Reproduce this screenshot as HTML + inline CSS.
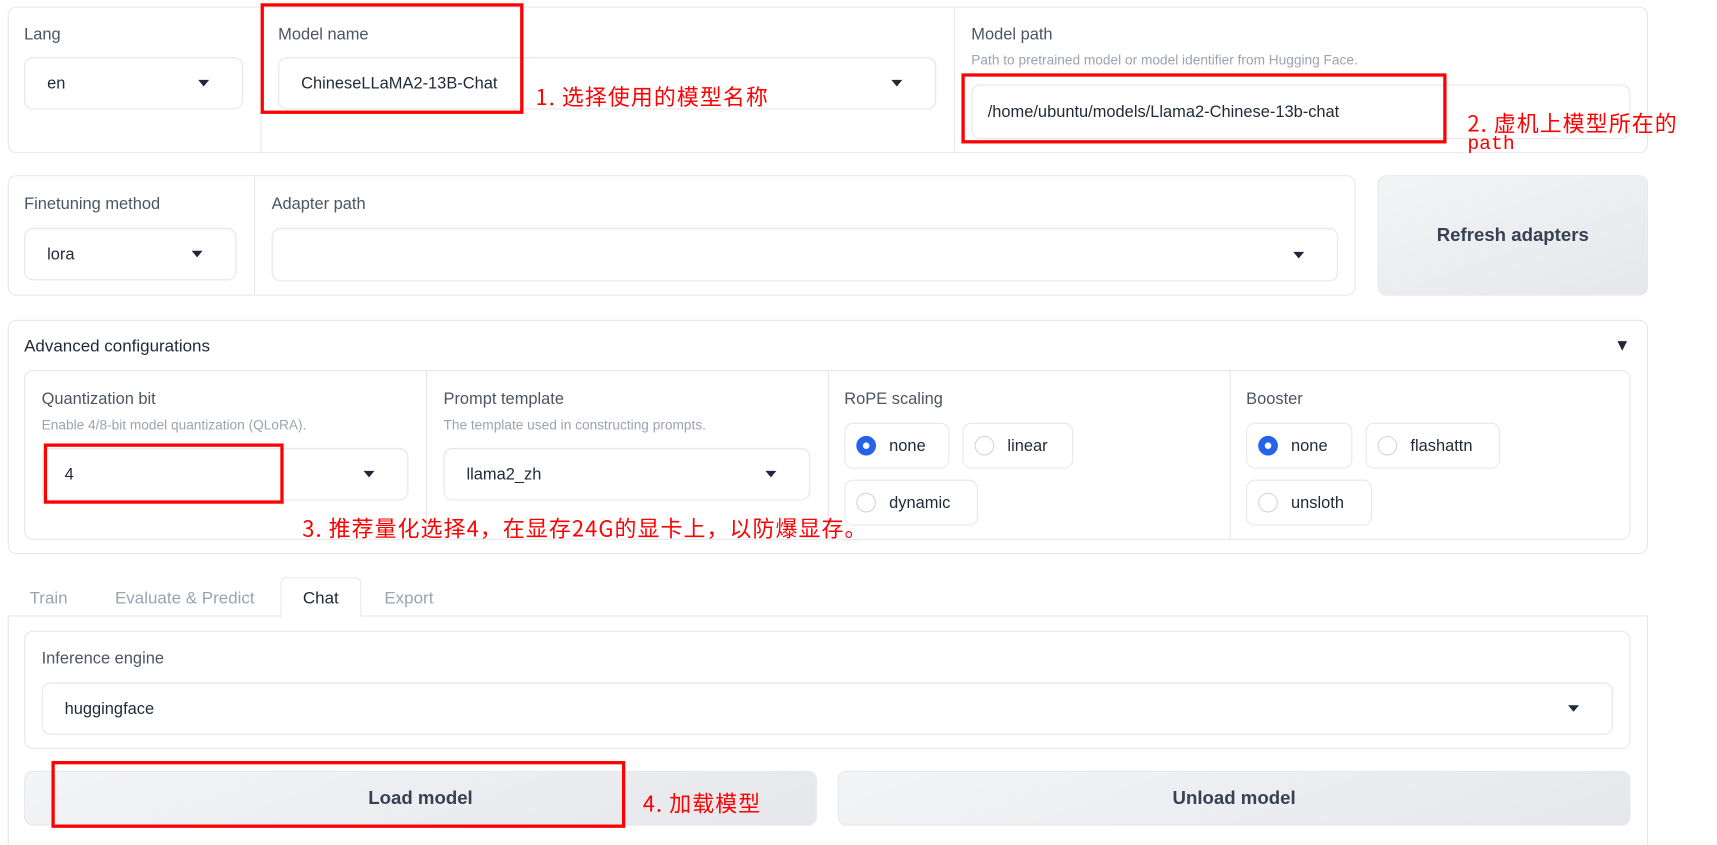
<!DOCTYPE html>
<html><head><meta charset="utf-8"><style>
html,body{margin:0;padding:0;background:#fff;width:1717px;height:841px;overflow:hidden}
#w{position:absolute;left:0;top:0;width:1568px;height:768px;transform:scale(1.09503);transform-origin:0 0;font-family:"Liberation Sans","Noto Sans CJK SC",sans-serif;color:#374151}
.a{position:absolute;box-sizing:border-box}
.card{border:1px solid #e5e7eb;border-radius:8px;background:#fff}
.lbl{font-size:15px;color:#4b5563;white-space:nowrap}
.sub{font-size:12.5px;color:#9ca3af;white-space:nowrap}
.dd{border:1px solid #e5e7eb;border-radius:8px;background:#fff;box-shadow:inset 0 1px 2px rgba(0,0,0,.04);font-size:15px;color:#1f2937;padding-left:20px;display:flex;align-items:center}
.car{position:absolute;right:30px;top:50%;margin-top:-3px;width:0;height:0;border-left:5px solid transparent;border-right:5px solid transparent;border-top:6px solid #1f2937}
.vl{position:absolute;width:1px;background:#e5e7eb}
.pill{border:1px solid #e5e7eb;border-radius:8px;background:#fff;font-size:15px;color:#1f2937;display:flex;align-items:center;padding-left:40px}
.rd{position:absolute;left:10px;top:50%;margin-top:-9px;width:18px;height:18px;border-radius:50%;box-sizing:border-box;border:1px solid #d1d5db;background:#fff}
.rd.on{background:#2563eb;border-color:#2563eb}
.rd.on:after{content:"";position:absolute;left:5px;top:5px;width:6px;height:6px;border-radius:50%;background:#fff}
.btn{border-radius:8px;background:linear-gradient(160deg,#f3f4f6,#e5e7eb);border:1px solid #e5e7eb;font-weight:bold;font-size:17px;color:#374151;display:flex;align-items:center;justify-content:center}
.red{border:3px solid #f00}
.rt{color:#f00;font-size:20px;letter-spacing:1px;white-space:nowrap;font-family:"WenQuanYi Zen Hei","Noto Sans CJK SC",sans-serif}
.tab{font-size:15.5px;color:#9ca3af;white-space:nowrap}
</style></head><body><div id="w">

<div class="a card" style="left:7px;top:6px;width:1498px;height:134px"></div>
<div class="vl" style="left:238px;top:7px;height:132px"></div>
<div class="vl" style="left:871px;top:7px;height:132px"></div>
<div class="a lbl" style="left:22px;top:23px">Lang</div>
<div class="a dd" style="left:22px;top:52px;width:200px;height:48px">en<span class="car" style="right:30px"></span></div>
<div class="a lbl" style="left:254px;top:23px">Model name</div>
<div class="a dd" style="left:254px;top:52px;width:601px;height:48px">ChineseLLaMA2-13B-Chat<span class="car"></span></div>
<div class="a lbl" style="left:887px;top:23px">Model path</div>
<div class="a sub" style="left:887px;top:48px">Path to pretrained model or model identifier from Hugging Face.</div>
<div class="a dd" style="left:887px;top:77px;width:602px;height:50px;padding-left:14px">/home/ubuntu/models/Llama2-Chinese-13b-chat</div>

<div class="a card" style="left:7px;top:160px;width:1231px;height:110px"></div>
<div class="vl" style="left:232px;top:161px;height:108px"></div>
<div class="a lbl" style="left:22px;top:178px">Finetuning method</div>
<div class="a dd" style="left:22px;top:208px;width:194px;height:48px">lora<span class="car"></span></div>
<div class="a lbl" style="left:248px;top:178px">Adapter path</div>
<div class="a dd" style="left:248px;top:208px;width:974px;height:49px"><span class="car"></span></div>
<div class="a btn" style="left:1258px;top:160px;width:247px;height:110px">Refresh adapters</div>

<div class="a card" style="left:7px;top:292px;width:1498px;height:214px"></div>
<div class="a" style="left:22px;top:308px;font-size:15.5px;color:#1f2937">Advanced configurations</div>
<div class="a" style="left:1474px;top:307px;font-size:15px;color:#1f2937">▼</div>
<div class="a card" style="left:22px;top:338px;width:1467px;height:155px"></div>
<div class="vl" style="left:389px;top:339px;height:153px"></div>
<div class="vl" style="left:756px;top:339px;height:153px"></div>
<div class="vl" style="left:1123px;top:339px;height:153px"></div>
<div class="a lbl" style="left:38px;top:356px">Quantization bit</div>
<div class="a sub" style="left:38px;top:381px">Enable 4/8-bit model quantization (QLoRA).</div>
<div class="a dd" style="left:38px;top:409px;width:335px;height:48px">4<span class="car"></span></div>
<div class="a lbl" style="left:405px;top:356px">Prompt template</div>
<div class="a sub" style="left:405px;top:381px">The template used in constructing prompts.</div>
<div class="a dd" style="left:405px;top:409px;width:335px;height:48px">llama2_zh<span class="car"></span></div>
<div class="a lbl" style="left:771px;top:356px">RoPE scaling</div>
<div class="a pill" style="left:771px;top:386px;width:96px;height:42px"><span class="rd on"></span>none</div>
<div class="a pill" style="left:879px;top:386px;width:101px;height:42px"><span class="rd"></span>linear</div>
<div class="a pill" style="left:771px;top:438px;width:122px;height:42px"><span class="rd"></span>dynamic</div>
<div class="a lbl" style="left:1138px;top:356px">Booster</div>
<div class="a pill" style="left:1138px;top:386px;width:97px;height:42px"><span class="rd on"></span>none</div>
<div class="a pill" style="left:1247px;top:386px;width:123px;height:42px"><span class="rd"></span>flashattn</div>
<div class="a pill" style="left:1138px;top:438px;width:115px;height:42px"><span class="rd"></span>unsloth</div>

<div class="a" style="left:7px;top:562px;width:1498px;height:210px;border-left:1px solid #e5e7eb;border-top:1px solid #e5e7eb;border-right:1px solid #e5e7eb"></div>
<div class="a tab" style="left:27px;top:538px">Train</div>
<div class="a tab" style="left:105px;top:538px">Evaluate &amp; Predict</div>
<div class="a" style="left:256px;top:527px;width:74px;height:37px;border:1px solid #e5e7eb;border-bottom:none;border-radius:6px 6px 0 0;background:#fff;font-size:15.5px;color:#1f2937;text-align:center;line-height:37px">Chat</div>
<div class="a tab" style="left:351px;top:538px">Export</div>
<div class="a card" style="left:22px;top:576px;width:1467px;height:108px"></div>
<div class="a lbl" style="left:38px;top:593px">Inference engine</div>
<div class="a dd" style="left:38px;top:623px;width:1435px;height:48px">huggingface<span class="car"></span></div>
<div class="a btn" style="left:22px;top:704px;width:724px;height:50px">Load model</div>
<div class="a btn" style="left:765px;top:704px;width:724px;height:50px">Unload model</div>

<div class="a red" style="left:238px;top:3px;width:240px;height:101px"></div>
<div class="a rt" style="left:489px;top:73px">1. 选择使用的模型名称</div>
<div class="a red" style="left:878px;top:67px;width:443px;height:64px"></div>
<div class="a rt" style="left:1340px;top:97px">2. 虚机上模型所在的</div>
<div class="a rt" style="left:1340px;top:122px;font-family:'Liberation Mono',monospace;font-size:18px;letter-spacing:0">path</div>
<div class="a red" style="left:40px;top:405px;width:219px;height:55px"></div>
<div class="a rt" style="left:276px;top:467px">3. 推荐量化选择4，在显存24G的显卡上，以防爆显存。</div>
<div class="a red" style="left:47px;top:695px;width:524px;height:61px"></div>
<div class="a rt" style="left:587px;top:718px">4. 加载模型</div>

</div></body></html>
